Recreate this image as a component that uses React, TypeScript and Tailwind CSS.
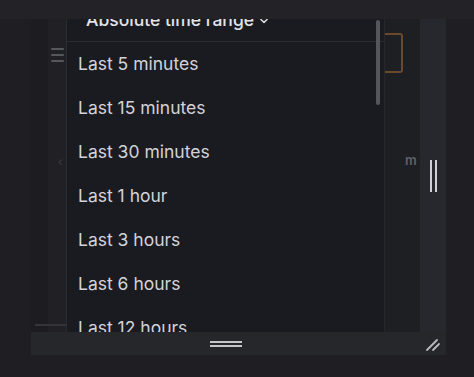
import React from "react";

const items = [
  "Last 5 minutes",
  "Last 15 minutes",
  "Last 30 minutes",
  "Last 1 hour",
  "Last 3 hours",
  "Last 6 hours",
  "Last 12 hours",
];

function ChevronDown() {
  return (
    <svg width="10" height="10" viewBox="0 0 10 10" fill="none" className="ml-[5px] mt-[2px]">
      <path d="M2 3.5 L5 6.5 L8 3.5" stroke="#d6d7dc" strokeWidth="1.6" strokeLinecap="round" strokeLinejoin="round" />
    </svg>
  );
}

function ResizeGrip() {
  return (
    <svg width="16" height="16" viewBox="0 0 16 16" fill="none">
      <path d="M2 14 L12 4" stroke="#b8b9be" strokeWidth="1.8" strokeLinecap="round" />
      <path d="M8 14 L14 8" stroke="#b8b9be" strokeWidth="1.8" strokeLinecap="round" />
    </svg>
  );
}

export default function App() {
  return (
    <div
      className="w-[474px] h-[377px] overflow-hidden bg-[#1f1f23] flex flex-col"
      style={{ fontFamily: "Inter, 'Noto Sans', sans-serif" }}
    >
      <div className="h-[19px] bg-[#232327] shrink-0" />
      <div className="flex shrink-0">
        <div className="w-[31px]" />
        <div className="w-[415px] h-[336px] flex flex-col bg-[#1f2024]">
          <div className="flex h-[313px] overflow-hidden">
            {/* left background strip */}
            <div className="w-[35px] flex bg-[#1d1d21]">
              <div className="w-[17px]" />
              <div className="w-[18px] flex flex-col bg-[#212125]">
                <div className="flex flex-col gap-[4px] pt-[29px] pl-[3px]">
                  <div className="h-[2px] w-[13px] bg-[#56575d] rounded-full" />
                  <div className="h-[2px] w-[13px] bg-[#56575d] rounded-full" />
                  <div className="h-[2px] w-[13px] bg-[#56575d] rounded-full" />
                </div>
                <div className="ml-[10px] mt-[94px] text-[12px] text-[#3d3e44] leading-none">‹</div>
                <div className="flex-1" />
                <div className="h-[2px] ml-[-13px] w-[31px] bg-[#34353a] mb-[6px]" />
              </div>
            </div>

            {/* dropdown */}
            <div className="relative w-[319px] bg-[#1a1b20] border-l border-[#2a2b30] border-r border-r-[#26272c] overflow-hidden">
              <div className="mt-[-16px] h-[39px] flex items-center pl-[19px] pb-[4px] border-b border-[#2b2c32]">
                <span className="text-[17.5px] font-medium text-[#e2e3e8] leading-none">Absolute time range</span>
                <ChevronDown />
              </div>
              <div className="flex flex-col">
                {items.map((label) => (
                  <div key={label} className="h-[44px] flex items-center pl-[11px]">
                    <span className="text-[17.5px] text-[#d2d3d9] leading-none">{label}</span>
                  </div>
                ))}
              </div>
              <div className="absolute right-[4px] top-[1px] w-[4px] h-[85px] rounded-full bg-[#55565c]" />
            </div>

            {/* right background strip */}
            <div className="w-[35px] flex flex-col bg-[#1e1f23]">
              <div className="mt-[14px] w-[18px] h-[40px] border-2 border-l-0 border-[#6a4a2b] rounded-r-[3px]" />
              <div className="ml-[20px] mt-[81px] text-[13px] font-semibold text-[#606167] leading-none">m</div>
            </div>

            {/* right column */}
            <div className="w-[26px] bg-[#27282d] flex flex-col">
              <div className="mt-[141px] ml-[10px] flex gap-[3px]">
                <div className="w-[2px] h-[32px] bg-[#cfd0d4]" />
                <div className="w-[2px] h-[32px] bg-[#cfd0d4]" />
              </div>
            </div>
          </div>

          {/* bottom bar */}
          <div className="h-[23px] bg-[#26272b] flex items-center">
            <div className="flex-1 flex justify-center">
              <div className="flex flex-col gap-[2px]">
                <div className="w-[32px] h-[2px] bg-[#c4c5ca]" />
                <div className="w-[32px] h-[2px] bg-[#c4c5ca]" />
              </div>
            </div>
            <div className="w-[26px] flex justify-center">
              <ResizeGrip />
            </div>
          </div>
        </div>
      </div>
    </div>
  );
}
